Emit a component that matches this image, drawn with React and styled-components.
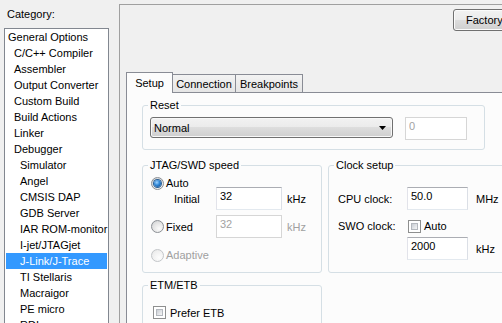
import React from 'react';
import styled, { createGlobalStyle } from 'styled-components';

const GlobalStyle = createGlobalStyle`
  html, body { margin: 0; padding: 0; background: #f0f0f0; }
  body { font-family: "Liberation Sans", Arial, sans-serif; font-size: 11px; color: #000; }
  *, *::before, *::after { box-sizing: border-box; }
`;

const Window = styled.div`
  display: flex;
  width: 502px;
  height: 323px;
  overflow: hidden;
  background: #f0f0f0;
`;

const Sidebar = styled.div`
  flex: none;
  width: 109px;
  padding: 8px 0 0 4px;
  display: flex;
  flex-direction: column;
`;

const CategoryLabel = styled.div`
  padding-left: 3px;
  height: 13px;
  line-height: 13px;
`;

const CategoryList = styled.ul`
  list-style: none;
  margin: 7px 0 0;
  padding: 0 1px;
  width: 105px;
  height: 400px;
  flex: none;
  border: 1px solid #828790;
  background: #fff;
`;

const CategoryItem = styled.li`
  height: 16px;
  line-height: 16px;
  white-space: nowrap;
  padding-left: ${(p) => 2 + p.$level * 6}px;
  background: ${(p) => (p.$selected ? '#3399ff' : 'transparent')};
  color: ${(p) => (p.$selected ? '#fff' : '#000')};
`;

const Frame = styled.div`
  flex: none;
  width: 420px;
  height: 400px;
  margin: 4px 0 0 10px;
  border: 1px solid #a0a0a0;
  display: flex;
  flex-direction: column;
`;

const FrameHeader = styled.div`
  display: flex;
  padding: 4px 0 0 333px;
`;

const PushButton = styled.button`
  flex: none;
  width: 100px;
  height: 22px;
  padding: 0 0 0 12px;
  text-align: left;
  white-space: nowrap;
  font: inherit;
  color: #000;
  border: 1px solid #707070;
  border-radius: 3px;
  background: linear-gradient(#f2f2f2 0%, #ebebeb 49%, #dddddd 50%, #cfcfcf 100%);
  box-shadow: inset 0 0 0 1px #fbfbfb;
`;

const TabStrip = styled.div`
  display: flex;
  align-items: flex-end;
  height: 20px;
  margin: 41px 0 0 6px;
`;

const Tab = styled.div`
  flex: none;
  position: relative;
  z-index: ${(p) => (p.$selected ? 1 : 0)};
  width: ${(p) => p.$w}px;
  height: ${(p) => (p.$selected ? 21 : 18)}px;
  margin-bottom: ${(p) => (p.$selected ? -1 : 0)}px;
  margin-left: ${(p) => (p.$first ? 0 : -1)}px;
  border: 1px solid #898c95;
  border-bottom: none;
  background: ${(p) => (p.$selected ? '#fcfcfc' : 'linear-gradient(#f3f3f3, #e5e5e5)')};
  display: flex;
  align-items: center;
  justify-content: center;
  white-space: nowrap;
`;

const TabPage = styled.div`
  flex: 1;
  margin-left: 6px;
  border-top: 1px solid #898c95;
  border-left: 1px solid #898c95;
  background: #fcfcfc;
  padding: 6px 0 0 15px;
  display: flex;
  flex-direction: column;
`;

const Group = styled.fieldset`
  flex: none;
  min-width: 0;
  width: ${(p) => p.$w}px;
  margin: ${(p) => p.$mt || 0}px 0 0;
  padding: 0;
  border: 1px solid #d5dfe5;
  border-radius: 3px;
`;

const Legend = styled.legend`
  margin-left: 5px;
  padding: 0 2px;
  height: 13px;
  line-height: 13px;
  white-space: nowrap;
`;

const GroupBody = styled.div`
  display: flex;
  flex-direction: ${(p) => (p.$row ? 'row' : 'column')};
  align-items: flex-start;
  padding: ${(p) => p.$pad};
`;

const GroupRow = styled.div`
  display: flex;
  gap: 6px;
  margin-top: 9px;
`;

const Dropdown = styled.div`
  flex: none;
  width: 243px;
  height: 21px;
  padding: 0 6px 0 3px;
  display: flex;
  align-items: center;
  justify-content: space-between;
  border: 1px solid #707070;
  border-radius: 3px;
  background: linear-gradient(#f2f2f2 0%, #ebebeb 49%, #dddddd 50%, #cfcfcf 100%);
  box-shadow: inset 0 0 0 1px #f8f8f8;
`;

const TextBox = styled.input`
  flex: none;
  width: ${(p) => p.$w}px;
  height: 23px;
  margin: 0 0 0 ${(p) => p.$ml || 0}px;
  padding: 0 3px 6px;
  font: inherit;
  color: #000;
  background: #fff;
  border: 1px solid;
  border-color: #abadb3 #dbdfe6 #e3e9ef #e2e3ea;
  border-radius: 0;
  outline: none;
  &:disabled {
    color: #a3a3a3;
    background: #fff;
    border-color: #d6d6d6;
  }
`;

const OptionRow = styled.div`
  display: flex;
  align-items: center;
  height: ${(p) => p.$h}px;
  margin-top: ${(p) => p.$mt || 0}px;
`;

const LabelCell = styled.div`
  flex: none;
  display: flex;
  align-items: center;
  width: ${(p) => p.$w}px;
  padding-left: ${(p) => p.$indent || 0}px;
  white-space: nowrap;
`;

const OptionText = styled.span`
  margin-left: ${(p) => p.$ml}px;
  white-space: nowrap;
  color: ${(p) => (p.$disabled ? '#a0a0a0' : '#000')};
`;

const Unit = styled.span`
  margin-left: ${(p) => p.$gap}px;
  color: ${(p) => (p.$disabled ? '#a0a0a0' : '#000')};
`;

const Radio = styled.span`
  flex: none;
  width: 13px;
  height: 13px;
  border-radius: 50%;
  border: 1px solid ${(p) => (p.$disabled ? '#c3c6c9' : '#8b8f94')};
  background: ${(p) =>
    p.$disabled
      ? 'radial-gradient(circle at 65% 70%, #fdfdfd 0%, #f0f0f0 60%, #e2e2e2 100%)'
      : 'radial-gradient(circle at 65% 70%, #fbfbfb 0%, #e4e4e4 55%, #c8cbcf 100%)'};
  display: flex;
  align-items: center;
  justify-content: center;
  &::after {
    content: '';
    display: ${(p) => (p.$checked ? 'block' : 'none')};
    width: 7px;
    height: 7px;
    border-radius: 50%;
    background: radial-gradient(circle at 40% 35%, #9fd3ff 0%, #2f86d6 45%, #0d3f7a 100%);
    box-shadow: 0 0 0 1px #2a5f95;
  }
`;

const CheckBox = styled.span`
  flex: none;
  width: 13px;
  height: 13px;
  border: 1px solid #8e8f8f;
  background: #fff;
  padding: 2px;
  &::after {
    content: '';
    display: block;
    width: 100%;
    height: 100%;
    border: 1px solid #b4b8be;
    background: linear-gradient(135deg, #c9cdd3 0%, #e4e6e9 60%, #f6f6f6 100%);
  }
`;

const categories = [
  ['General Options', 0],
  ['C/C++ Compiler', 1],
  ['Assembler', 1],
  ['Output Converter', 1],
  ['Custom Build', 1],
  ['Build Actions', 1],
  ['Linker', 1],
  ['Debugger', 1],
  ['Simulator', 2],
  ['Angel', 2],
  ['CMSIS DAP', 2],
  ['GDB Server', 2],
  ['IAR ROM-monitor', 2],
  ['I-jet/JTAGjet', 2],
  ['J-Link/J-Trace', 2],
  ['TI Stellaris', 2],
  ['Macraigor', 2],
  ['PE micro', 2],
  ['RDI', 2],
  ['ST-LINK', 2],
];

const tabs = [
  ['Setup', 47],
  ['Connection', 64],
  ['Breakpoints', 68],
];

function Arrow() {
  return (
    <svg width="7" height="4" viewBox="0 0 7 4">
      <path d="M0 0H7L3.5 4Z" fill="#000" />
    </svg>
  );
}

export default function App() {
  return (
    <>
      <GlobalStyle />
      <Window>
        <Sidebar>
          <CategoryLabel>Category:</CategoryLabel>
          <CategoryList>
            {categories.map(([name, level]) => (
              <CategoryItem key={name} $level={level} $selected={name === 'J-Link/J-Trace'}>
                {name}
              </CategoryItem>
            ))}
          </CategoryList>
        </Sidebar>
        <Frame>
          <FrameHeader>
            <PushButton type="button">Factory Settings</PushButton>
          </FrameHeader>
          <TabStrip>
            {tabs.map(([name, w], i) => (
              <Tab key={name} $w={w} $first={i === 0} $selected={i === 0}>
                {name}
              </Tab>
            ))}
          </TabStrip>
          <TabPage>
            <Group $w={343}>
              <Legend>Reset</Legend>
              <GroupBody $row $pad="5px 0 9px 7px">
                <Dropdown>
                  <span>Normal</span>
                  <Arrow />
                </Dropdown>
                <TextBox $w={62} $ml={12} disabled defaultValue="0" />
              </GroupBody>
            </Group>
            <GroupRow>
              <Group $w={180}>
                <Legend>JTAG/SWD speed</Legend>
                <GroupBody $pad="4px 0 10px 8px">
                  <OptionRow $h={14}>
                    <Radio $checked />
                    <OptionText $ml={2}>Auto</OptionText>
                  </OptionRow>
                  <OptionRow $h={23} $mt={-3}>
                    <LabelCell $w={65} $indent={23}>Initial</LabelCell>
                    <TextBox $w={66} readOnly defaultValue="32" />
                    <Unit $gap={5}>kHz</Unit>
                  </OptionRow>
                  <OptionRow $h={23} $mt={5}>
                    <LabelCell $w={65}>
                      <Radio />
                      <OptionText $ml={2}>Fixed</OptionText>
                    </LabelCell>
                    <TextBox $w={66} disabled defaultValue="32" />
                    <Unit $gap={5} $disabled>kHz</Unit>
                  </OptionRow>
                  <OptionRow $h={14} $mt={10}>
                    <Radio $disabled />
                    <OptionText $ml={2} $disabled>Adaptive</OptionText>
                  </OptionRow>
                </GroupBody>
              </Group>
              <Group $w={200}>
                <Legend>Clock setup</Legend>
                <GroupBody $pad="15px 0 12px 9px">
                  <OptionRow $h={23}>
                    <LabelCell $w={69}>CPU clock:</LabelCell>
                    <TextBox $w={61} readOnly defaultValue="50.0" />
                    <Unit $gap={8}>MHz</Unit>
                  </OptionRow>
                  <OptionRow $h={14} $mt={9}>
                    <LabelCell $w={70}>SWO clock:</LabelCell>
                    <CheckBox />
                    <OptionText $ml={3}>Auto</OptionText>
                  </OptionRow>
                  <OptionRow $h={23} $mt={4}>
                    <LabelCell $w={69} />
                    <TextBox $w={61} readOnly defaultValue="2000" />
                    <Unit $gap={8}>kHz</Unit>
                  </OptionRow>
                </GroupBody>
              </Group>
            </GroupRow>
            <Group $w={180} $mt={6}>
              <Legend>ETM/ETB</Legend>
              <GroupBody $pad="14px 0 10px 10px">
                <OptionRow $h={13}>
                  <CheckBox />
                  <OptionText $ml={4}>Prefer ETB</OptionText>
                </OptionRow>
              </GroupBody>
            </Group>
          </TabPage>
        </Frame>
      </Window>
    </>
  );
}
